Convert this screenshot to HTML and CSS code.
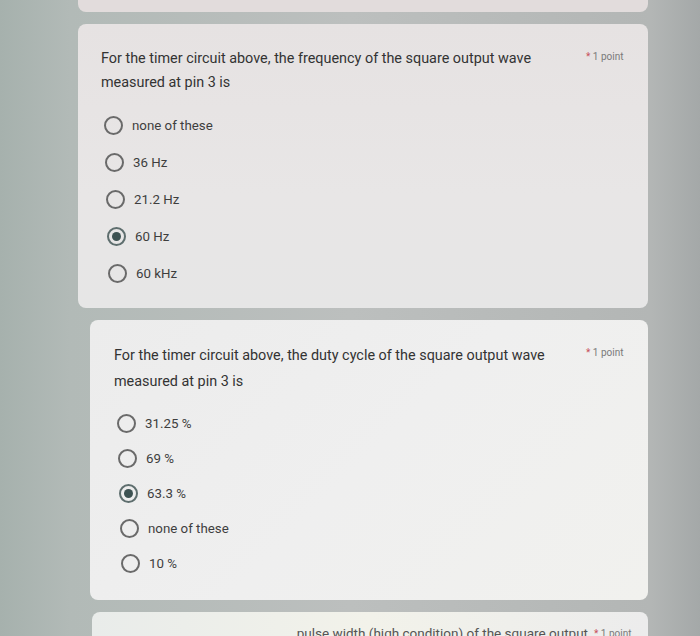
FILE: index.html
```html
<!DOCTYPE html>
<html>
<head>
<meta charset="utf-8">
<link rel="stylesheet" href="styles.css">
</head>
<body>
<div class="page">
  <div class="card card-top"></div>

  <div class="card card-1">
    <div class="head">
      <div class="title">For the timer circuit above, the frequency of the square output wave measured at pin 3 is</div>
      <div class="points"><span class="req">*</span> 1 point</div>
    </div>
    <div class="options">
      <div class="opt"><span class="radio"></span><span class="label">none of these</span></div>
      <div class="opt s1"><span class="radio"></span><span class="label">36 Hz</span></div>
      <div class="opt s2"><span class="radio"></span><span class="label">21.2 Hz</span></div>
      <div class="opt s3"><span class="radio on"></span><span class="label">60 Hz</span></div>
      <div class="opt s4"><span class="radio"></span><span class="label">60 kHz</span></div>
    </div>
  </div>

  <div class="card card-2">
    <div class="head">
      <div class="title">For the timer circuit above, the duty cycle of the square output wave measured at pin 3 is</div>
      <div class="points"><span class="req">*</span> 1 point</div>
    </div>
    <div class="options">
      <div class="opt"><span class="radio"></span><span class="label">31.25 %</span></div>
      <div class="opt s1"><span class="radio"></span><span class="label">69 %</span></div>
      <div class="opt s2"><span class="radio on"></span><span class="label">63.3 %</span></div>
      <div class="opt s3"><span class="radio"></span><span class="label">none of these</span></div>
      <div class="opt s4"><span class="radio"></span><span class="label">10 %</span></div>
    </div>
  </div>

  <div class="card card-3">
    <div class="head tail-head">
      <div class="tail">pulse width (high condition) of the square output</div>
      <div class="points"><span class="req">*</span> 1 point</div>
    </div>
  </div>
</div>
</body>
</html>
```
FILE: styles.css
```css
html, body {
  margin: 0;
  padding: 0;
}
body {
  width: 700px;
  height: 636px;
  overflow: hidden;
  background: linear-gradient(90deg, #a6b1ad 0%, #b2bab7 10%, #bcbfbe 50%, #b3b6b5 93%, #a4a8a8 100%);
  font-family: Roboto, "Noto Sans", sans-serif;
  color: #3b3b3b;
}
.page {
  display: flex;
  flex-direction: column;
  gap: 12px;
  margin-top: -40px;
}
.card {
  border-radius: 8px;
  box-sizing: border-box;
}
.card-top {
  height: 52px;
  margin-left: 78px;
  width: 570px;
  background: #e2dcdc;
}
.card-1 {
  margin-left: 78px;
  width: 570px;
  height: 284px;
  padding: 23px 8px 0 23px;
  background: linear-gradient(180deg, #e6e2e2 0%, #e8e6e6 60%, #e6e6e6 100%);
}
.card-2 {
  margin-left: 90px;
  width: 558px;
  height: 280px;
  padding: 23px 8px 0 24px;
  background: linear-gradient(135deg, #ececec 0%, #efefef 50%, #f1f1ee 100%);
}
.card-3 {
  margin-left: 92px;
  width: 556px;
  height: 60px;
  padding: 13px 8px 0 24px;
  background: linear-gradient(90deg, #e9ecea 0%, #f2f2ea 50%, #ececec 100%);
}
.head {
  display: flex;
  justify-content: space-between;
  align-items: flex-start;
}
.title {
  width: 450px;
  font-size: 14.4px;
  line-height: 24px;
  color: #333333;
}
.card-2 .title {
  line-height: 26px;
}
.points {
  font-size: 10px;
  color: #7a7a7a;
  white-space: nowrap;
  width: 54px;
}
.card-1 .points { padding-top: 4px; }
.card-2 .points { padding-top: 4px; }
.req {
  color: #c7505a;
}
.tail-head {
  justify-content: flex-end;
  gap: 6px;
}
.tail {
  white-space: nowrap;
  color: #555;
  font-size: 13.5px;
}
.card-3 .points { padding-top: 3px; width: 46px; }
.options {
  display: flex;
  flex-direction: column;
  margin-top: 12px;
}
.card-2 .options {
  margin-top: 11px;
}
.opt {
  display: flex;
  align-items: center;
  height: 37px;
  gap: 9px;
  padding-left: 3px;
  font-size: 13.3px;
  color: #3e3e3e;
}
.card-2 .opt { height: 35px; }
.opt.s1 { padding-left: 4px; }
.opt.s2 { padding-left: 5px; }
.opt.s3 { padding-left: 6px; }
.opt.s4 { padding-left: 7px; }
.radio {
  width: 15px;
  height: 15px;
  border: 2px solid #6a6a6a;
  border-radius: 50%;
  display: inline-flex;
  align-items: center;
  justify-content: center;
  flex: none;
}
.radio.on {
  border-color: #5e6e6e;
}
.radio.on::after {
  content: "";
  width: 9px;
  height: 9px;
  border-radius: 50%;
  background: #3d5252;
}
```
